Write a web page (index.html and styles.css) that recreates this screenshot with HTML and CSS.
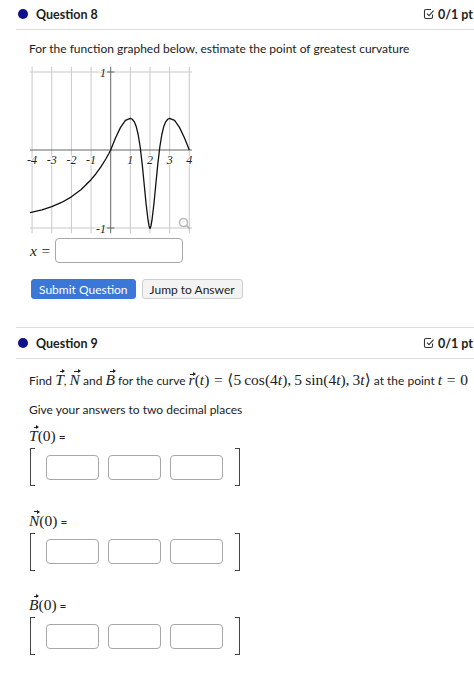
FILE: index.html
```html
<!DOCTYPE html>
<html lang="en">
<head>
    <meta charset="UTF-8">
    <meta name="viewport" content="width=device-width, initial-scale=1.0">
    <title>Questions 8 and 9</title>
    <link rel="stylesheet" href="styles.css">
</head>
<body>
    <!-- Question 8 -->
    <div class="question first">
        <div class="q-head">
            <span class="dot"></span>
            <span class="q-title">Question 8</span>
            <span class="pts">
                <svg class="check" width="12" height="12" viewBox="0 0 12 12">
                    <path d="M9.5 6.5v2.5a1.5 1.5 0 0 1-1.5 1.5H3a1.5 1.5 0 0 1-1.5-1.5V3A1.5 1.5 0 0 1 3 1.5h5" fill="none" stroke="#333" stroke-width="1.1"/>
                    <path d="M4 5.6l2 2 4.5-5" fill="none" stroke="#333" stroke-width="1.1"/>
                </svg>
                0/1 pt
            </span>
        </div>
        <div class="q-body">
            <p class="text">For the function graphed below, estimate the point of greatest curvature</p>

            <svg class="graph" width="170" height="172" viewBox="0 0 170 172">
                <g stroke="#c9c9c9" stroke-width="1">
                    <line x1="6.1" y1="2.7" x2="6.1" y2="169.3"/>
                    <line x1="25.75" y1="2.7" x2="25.75" y2="169.3"/>
                    <line x1="45.4" y1="2.7" x2="45.4" y2="169.3"/>
                    <line x1="65.05" y1="2.7" x2="65.05" y2="169.3"/>
                    <line x1="104.35" y1="2.7" x2="104.35" y2="169.3"/>
                    <line x1="124" y1="2.7" x2="124" y2="169.3"/>
                    <line x1="143.65" y1="2.7" x2="143.65" y2="169.3"/>
                    <line x1="163.3" y1="2.7" x2="163.3" y2="169.3"/>
                    <line x1="4" y1="8" x2="166" y2="8"/>
                    <line x1="4" y1="164" x2="166" y2="164"/>
                </g>
                <g stroke="#666" stroke-width="1">
                    <line x1="84.7" y1="2.7" x2="84.7" y2="169.3"/>
                    <line x1="4" y1="86" x2="166" y2="86"/>
                    <line x1="81" y1="8" x2="88.4" y2="8"/>
                    <line x1="81" y1="164" x2="88.4" y2="164"/>
                </g>
                <g class="tick">
                    <text x="6.1" y="100">-4</text>
                    <text x="25.75" y="100">-3</text>
                    <text x="45.4" y="100">-2</text>
                    <text x="65.05" y="100">-1</text>
                    <text x="104.35" y="100">1</text>
                    <text x="124" y="100">2</text>
                    <text x="143.65" y="100">3</text>
                    <text x="163.3" y="100">4</text>
                    <text x="77" y="13">1</text>
                    <text x="75" y="169">-1</text>
                </g>
                <path d="M4 148.6 L15.93 145.96 L25.75 142.7 L35.58 138.45 L45.4 132.83 L55.23 125.44 L65.05 115.7 L69.96 109.73 L74.88 102.88 L79.79 95.02 L82.74 89.76 L84.7 86 L86.67 81 L89.61 73.76 L94.53 63.39 L99.44 56.46 L104.35 54.32 L106.32 55.26 L108.28 57.79 L110.25 62.62 L112.21 70.73 L114.18 83 L116.14 99.68 L118.11 119.55 L120.07 139.71 L122.04 156.22 L123.02 161.94 L124 164.5 L124.98 161.94 L125.97 156.22 L127.93 139.71 L129.89 119.55 L131.86 99.68 L133.82 83 L135.79 70.73 L137.75 62.62 L139.72 57.79 L141.68 55.26 L143.65 54.32 L148.56 56.46 L153.47 63.39 L158.39 73.76 L161.33 81 L163.3 86"
                      fill="none" stroke="#111" stroke-width="1.3" stroke-linejoin="round"/>
                <!-- zoom glass -->
                <circle cx="157.5" cy="158.5" r="4" fill="none" stroke="#bbb" stroke-width="1.6"/>
                <line x1="160.5" y1="161.5" x2="164" y2="165" stroke="#bbb" stroke-width="2"/>
            </svg>

            <div class="answer-row">
                <span class="math"><i>x</i><span class="rel">=</span></span>
                <input class="ans wide" type="text">
            </div>

            <div class="actions">
                <button class="btn primary">Submit Question</button>
                <button class="btn">Jump to Answer</button>
            </div>
        </div>
    </div>

    <!-- Question 9 -->
    <div class="question">
        <div class="q-head">
            <span class="dot"></span>
            <span class="q-title">Question 9</span>
            <span class="pts">
                <svg class="check" width="12" height="12" viewBox="0 0 12 12">
                    <path d="M9.5 6.5v2.5a1.5 1.5 0 0 1-1.5 1.5H3a1.5 1.5 0 0 1-1.5-1.5V3A1.5 1.5 0 0 1 3 1.5h5" fill="none" stroke="#333" stroke-width="1.1"/>
                    <path d="M4 5.6l2 2 4.5-5" fill="none" stroke="#333" stroke-width="1.1"/>
                </svg>
                0/1 pt
            </span>
        </div>
        <div class="q-body">
            <p class="text find">Find <span class="math"><i class="vec">T</i></span>, <span class="math"><i class="vec">N</i></span> and <span class="math"><i class="vec">B</i></span> for the curve <span class="math"><i class="vec low">r</i>(<i>t</i>)<span class="rel">=</span>⟨5&#8201;cos(4<i>t</i>),&#8201;5&#8201;sin(4<i>t</i>),&#8201;3<i>t</i>⟩</span> at the point <span class="math"><i>t</i><span class="rel">=</span>0</span></p>
            <p class="text give">Give your answers to two decimal places</p>

            <div class="vector">
                <div class="v-label"><span class="math"><i class="vec">T</i>(0)</span> =</div>
                <div class="v-row">
                    <span class="bracket"></span>
                    <input class="ans" type="text">
                    <input class="ans" type="text">
                    <input class="ans" type="text">
                    <span class="bracket close"></span>
                </div>
            </div>

            <div class="vector">
                <div class="v-label"><span class="math"><i class="vec">N</i>(0)</span> =</div>
                <div class="v-row">
                    <span class="bracket"></span>
                    <input class="ans" type="text">
                    <input class="ans" type="text">
                    <input class="ans" type="text">
                    <span class="bracket close"></span>
                </div>
            </div>

            <div class="vector">
                <div class="v-label"><span class="math"><i class="vec">B</i>(0)</span> =</div>
                <div class="v-row">
                    <span class="bracket"></span>
                    <input class="ans" type="text">
                    <input class="ans" type="text">
                    <input class="ans" type="text">
                    <span class="bracket close"></span>
                </div>
            </div>
        </div>
    </div>
</body>
</html>
```

FILE: styles.css
```css
/* Page */
body {
    margin: 0;
    font-family: Lato, 'Noto Sans', sans-serif;
    font-size: 12px;
    color: #222;
    background: #fff;
    overflow: hidden;
}

/* Question block */
.question {
    margin-left: 16px;
    width: 458px;
}

.question.first {
    margin-top: -2px;
}

.q-head {
    display: flex;
    align-items: center;
    box-sizing: border-box;
    height: 32px;
    border-top: 1px solid #dcdcdc;
    border-bottom: 1px solid #dcdcdc;
}

.dot {
    width: 10px;
    height: 10px;
    margin-left: 2px;
    border-radius: 50%;
    background: #10108c;
}

.q-title {
    margin-left: 8px;
    font-weight: bold;
    font-size: 12.5px;
}

.pts {
    display: flex;
    align-items: center;
    gap: 3px;
    margin-left: auto;
    margin-right: 1px;
    font-weight: bold;
    font-size: 12.5px;
    white-space: nowrap;
}

.check {
    margin-top: -1px;
}

.q-body {
    padding-left: 13px;
}

.text {
    margin: 0;
    line-height: 16px;
}

.q-body > .text:first-child {
    margin-top: 11px;
}

/* Graph */
.graph {
    display: block;
    margin: 7px 0 0 -3px;
}

.tick text {
    font-family: 'Liberation Serif', serif;
    font-style: italic;
    font-size: 12px;
    text-anchor: middle;
    fill: #222;
    stroke: #fff;
    stroke-width: 2px;
    paint-order: stroke;
}

/* Math */
.math {
    font-family: 'Liberation Serif', 'DejaVu Serif', serif;
    font-size: 15.5px;
}

.math i {
    font-style: italic;
}

.rel {
    margin: 0 0.3em;
}

.vec {
    position: relative;
    display: inline-block;
    line-height: 1;
}

/* arrow shaft */
.vec::before {
    content: "";
    position: absolute;
    left: 0.3em;
    right: 0;
    top: -1.5px;
    border-top: 1px solid currentColor;
}

/* arrow head */
.vec::after {
    content: "";
    position: absolute;
    right: -1px;
    top: -3px;
    border-left: 3px solid currentColor;
    border-top: 2px solid transparent;
    border-bottom: 2px solid transparent;
}

.vec.low::before {
    top: 1.5px;
    left: 0.1em;
}

.vec.low::after {
    top: 0;
}

/* Inputs */
.answer-row {
    display: flex;
    align-items: center;
    gap: 5px;
    margin-top: 2px;
}

.answer-row .math {
    margin-left: 1px;
}

.answer-row .rel {
    margin-right: 0;
}

.ans {
    box-sizing: border-box;
    width: 53px;
    height: 25px;
    border: 1px solid #a8a8a8;
    border-radius: 4px;
    background: #fff;
}

.ans.wide {
    width: 128px;
}

/* Buttons */
.actions {
    display: flex;
    gap: 6px;
    margin: 16px 0 0 2px;
}

.btn {
    height: 20px;
    padding: 0 7px;
    font-family: Lato, 'Noto Sans', sans-serif;
    font-size: 12px;
    color: #222;
    background: #f3f3f3;
    border: 1px solid #cfcfcf;
    border-radius: 3px;
}

.btn.primary {
    color: #fff;
    background: #3a77d6;
    border-color: #3a77d6;
}

/* Question 9 */
.question + .question {
    margin-top: 28px;
}

.find {
    margin-top: 17px;
    line-height: 20px;
}

.give {
    margin-top: 11px;
}

.vector {
    margin-top: 9px;
}

.vector + .vector {
    margin-top: 25.5px;
}

.v-label {
    line-height: 18px;
}

.v-row {
    display: flex;
    align-items: center;
    gap: 9px;
    height: 38px;
    margin: 2px 0 0 1px;
}

.bracket {
    box-sizing: border-box;
    width: 5px;
    height: 38px;
    margin-right: 2px;
    border: 1.5px solid #444;
    border-right: none;
}

.bracket.close {
    margin: 0 0 0 3px;
    border: 1.5px solid #444;
    border-left: none;
}
```
